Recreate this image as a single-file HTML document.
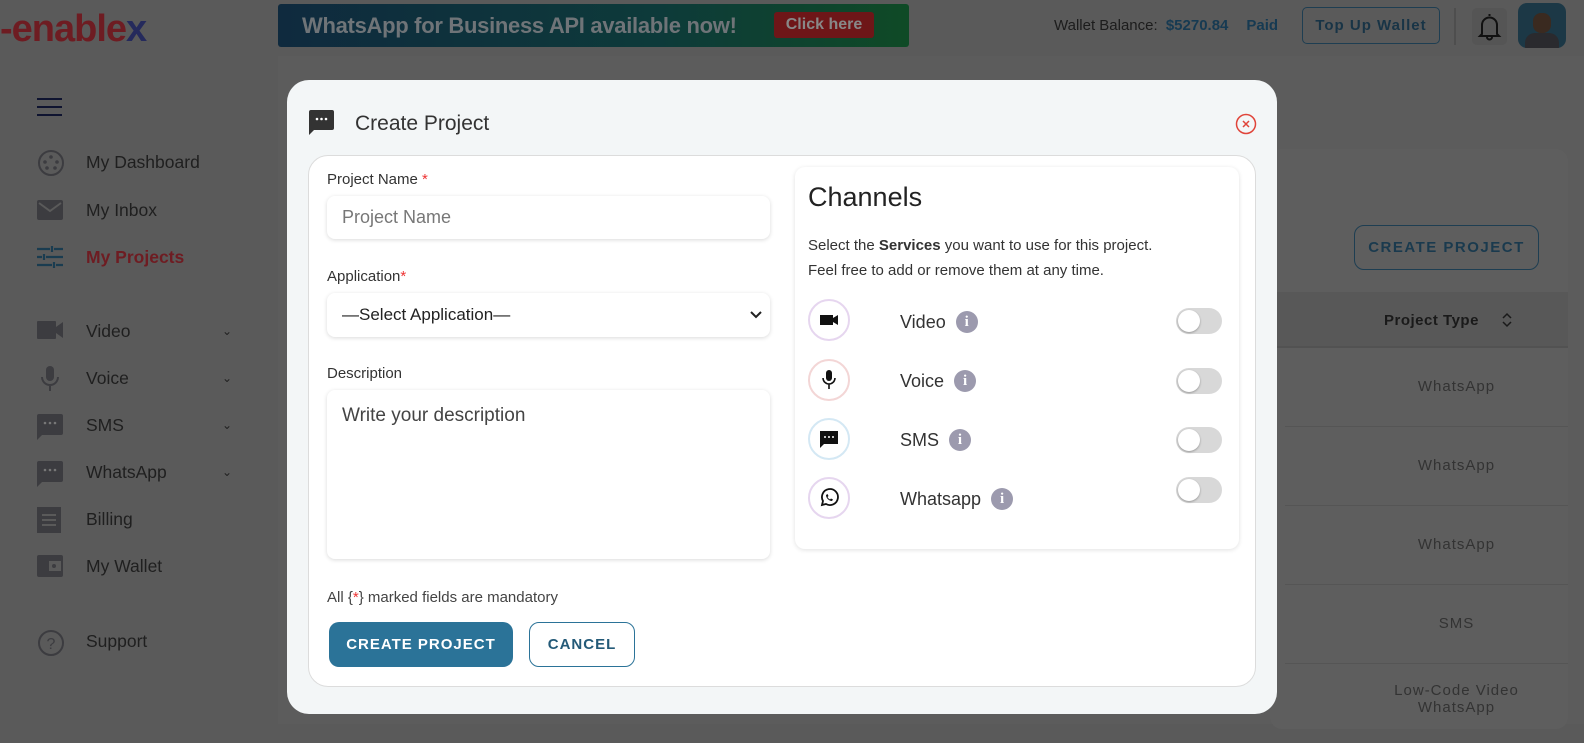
<!DOCTYPE html>
<html><head><meta charset="utf-8"><style>
*{box-sizing:border-box;margin:0;padding:0}
body{width:1584px;height:724px;overflow:hidden;background:#5a5a5a;font-family:"Liberation Sans",sans-serif;position:relative;color:#2a2a2a}
.abs{position:absolute}
.side div{position:absolute;left:86px;font-size:17.5px;color:#1f1f1f}
.side svg{position:absolute;left:37px}
.chev{position:absolute;left:222px;font-size:12px;color:#222}
.lbl{font-size:15px;color:#333}
.inp{position:absolute;left:327px;width:443px;background:#fff;border-radius:8px;box-shadow:0 1px 4px rgba(0,0,0,.15);font-size:18px;color:#777;padding-left:15px}
.ch{position:absolute;left:808px;width:42px;height:42px;border-radius:50%;border:2px solid #e6d6ef;background:#fff}
.ch svg{position:absolute;left:9px;top:9px}
.chn{position:absolute;left:900px;font-size:18px;color:#333}
.info{display:inline-block;width:22px;height:22px;border-radius:50%;background:#9c9aae;color:#fff;font-size:15px;font-weight:bold;text-align:center;line-height:22px;font-family:"Liberation Serif",serif;vertical-align:2px;margin-left:10px}
.tg{position:absolute;left:1176px;width:46px;height:26px;border-radius:13px;background:#d8d8d8}
.tg::after{content:"";position:absolute;left:2px;top:2px;width:22px;height:22px;border-radius:50%;background:#fff;box-shadow:0 1px 2px rgba(0,0,0,.3)}
.row{position:absolute;left:1285px;width:283px;height:79px;border-bottom:1px solid #555;text-align:center;font-size:15px;color:#333;letter-spacing:1px;padding-left:60px}
</style></head><body>
<div class="abs" style="left:0;top:8px;font-size:38px;font-weight:bold;color:#6e1c22;letter-spacing:-1px">-enable<span style="color:#252a5c">x</span></div>
<div class="abs" style="left:278px;top:4px;width:631px;height:43px;border-radius:3px;background:linear-gradient(90deg,#0f2a3e,#0d3a3a 60%,#0f4a26)">
<div class="abs" style="left:24px;top:9px;font-size:22px;font-weight:bold;color:#6f7478;letter-spacing:-.3px">WhatsApp for Business API available now!</div>
<div class="abs" style="left:496px;top:8px;width:100px;height:26px;background:#6e1618;border-radius:3px;color:#888;font-size:16px;font-weight:bold;text-align:center;line-height:26px">Click here</div></div>
<div class="abs" style="left:1054px;top:17px;font-size:15px;color:#1c1c1c">Wallet Balance: <b style="color:#163a52;margin-left:4px">$5270.84</b><b style="color:#163a52;margin-left:18px">Paid</b></div>
<div class="abs" style="left:1302px;top:7px;width:138px;height:37px;border:1px solid #1e3e52;border-radius:5px;font-size:15px;font-weight:bold;color:#183446;text-align:center;line-height:36px;letter-spacing:1px">Top Up Wallet</div>
<div class="abs" style="left:1454px;top:8px;width:2px;height:37px;background:#4e4e4e"></div>
<div class="abs" style="left:1472px;top:8px;width:35px;height:37px;background:#555;border-radius:5px"><svg width="35" height="37" viewBox="0 0 35 37"><path d="M17.5 6v2M10 26V17a7.5 7.5 0 0 1 15 0v9l2 2H8z M15 29a2.5 2.5 0 0 0 5 0" fill="none" stroke="#111" stroke-width="2"/></svg></div>
<div class="abs" style="left:1518px;top:3px;width:48px;height:45px;border-radius:9px;background:#1c3846;overflow:hidden"><div style="margin:10px auto 0;width:18px;height:20px;background:#3a2a20;border-radius:8px"></div><div style="margin:0 auto;width:34px;height:20px;background:#2a2a2e;border-radius:10px 10px 0 0"></div></div>
<div class="abs" style="left:278px;top:56px;width:1306px;height:668px;background:#5c5c5c"></div>
<div class="abs" style="left:1270px;top:149px;width:298px;height:580px;background:#5e5e5e;border-radius:12px"></div>
<div class="abs" style="left:1354px;top:225px;width:185px;height:45px;border:1px solid #1e3e52;border-radius:10px;font-size:15px;font-weight:bold;color:#1a3a4e;text-align:center;line-height:44px;letter-spacing:1.5px">CREATE PROJECT</div>
<div class="abs" style="left:1270px;top:292px;width:298px;height:56px;background:#585858;border-bottom:2px solid #525252"></div>
<div class="abs" style="left:1384px;top:312px;font-size:15px;font-weight:bold;color:#1a1a1a;letter-spacing:.5px">Project Type</div>
<svg class="abs" style="left:1500px;top:311px" width="14" height="18"><path d="M3 7l4-4 4 4M3 11l4 4 4-4" fill="none" stroke="#1a1a1a" stroke-width="1.5"/></svg>
<div class="row" style="top:348px;padding-top:30px">WhatsApp</div>
<div class="row" style="top:427px;padding-top:30px">WhatsApp</div>
<div class="row" style="top:506px;padding-top:30px">WhatsApp</div>
<div class="row" style="top:585px;padding-top:30px">SMS</div>
<div class="row" style="top:664px;padding-top:18px;border:0">Low-Code Video<br>WhatsApp</div>
<div class="side">
<div class="abs" style="left:37px;top:98px;width:25px;height:2px;background:#0f1430;box-shadow:0 8px 0 #0f1430,0 16px 0 #0f1430"></div>
<svg style="top:149px" width="28" height="28"><circle cx="14" cy="14" r="12" fill="none" stroke="#3c3c40" stroke-width="2"/><circle cx="14" cy="8" r="1.8" fill="#3c3c40"/><circle cx="8" cy="13" r="1.8" fill="#3c3c40"/><circle cx="20" cy="13" r="1.8" fill="#3c3c40"/><circle cx="10" cy="19" r="1.8" fill="#3c3c40"/><circle cx="18" cy="19" r="1.8" fill="#3c3c40"/></svg><div style="top:152px">My Dashboard</div>
<svg style="top:200px" width="26" height="20"><rect width="26" height="20" rx="2" fill="#3c3c40"/><path d="M2 3l11 8 11-8" fill="none" stroke="#5a5a5a" stroke-width="2"/></svg><div style="top:200px">My Inbox</div>
<svg style="top:246px" width="26" height="22"><path d="M0 3h13M17 3h9M15 0v6M0 11h5M9 11h17M7 8v6M0 19h15M19 19h7M17 16v6" stroke="#1a3c50" stroke-width="2.2"/></svg><div style="top:247px;color:#6e1c22;font-weight:bold">My Projects</div>
<svg style="top:321px" width="26" height="18"><rect width="19" height="18" rx="1" fill="#3c3c40"/><path d="M19 6l7-5v16l-7-5z" fill="#3c3c40"/></svg><div style="top:321px">Video</div><span class="chev" style="top:324px">⌄</span>
<svg style="top:365px" width="26" height="28"><rect x="9" y="1" width="8" height="15" rx="4" fill="#3c3c40"/><path d="M5 12a8 8 0 0 0 16 0M13 20v6" fill="none" stroke="#3c3c40" stroke-width="2"/></svg><div style="top:368px">Voice</div><span class="chev" style="top:371px">⌄</span>
<svg style="top:414px" width="26" height="26"><path d="M0 2a2 2 0 0 1 2-2h22a2 2 0 0 1 2 2v17a2 2 0 0 1-2 2H5l-5 5z" fill="#3c3c40"/><circle cx="8" cy="9" r="1.3" fill="#777"/><circle cx="13" cy="9" r="1.3" fill="#777"/><circle cx="18" cy="9" r="1.3" fill="#777"/></svg><div style="top:415px">SMS</div><span class="chev" style="top:418px">⌄</span>
<svg style="top:461px" width="26" height="26"><path d="M0 2a2 2 0 0 1 2-2h22a2 2 0 0 1 2 2v17a2 2 0 0 1-2 2H5l-5 5z" fill="#3c3c40"/><circle cx="8" cy="9" r="1.3" fill="#777"/><circle cx="13" cy="9" r="1.3" fill="#777"/><circle cx="18" cy="9" r="1.3" fill="#777"/></svg><div style="top:462px">WhatsApp</div><span class="chev" style="top:465px">⌄</span>
<svg style="top:507px" width="24" height="26"><rect width="24" height="26" fill="#3c3c40"/><path d="M5 8h14M5 13h14M5 18h14" stroke="#5a5a5a" stroke-width="2"/></svg><div style="top:509px">Billing</div>
<svg style="top:555px" width="26" height="22"><rect width="26" height="22" rx="2" fill="#3c3c40"/><rect x="12" y="6" width="12" height="10" fill="#5a5a5a"/><circle cx="17" cy="11" r="2" fill="#3c3c40"/></svg><div style="top:556px">My Wallet</div>
<svg style="top:629px" width="28" height="28"><circle cx="14" cy="14" r="12" fill="none" stroke="#3c3c40" stroke-width="2"/><text x="14" y="20" text-anchor="middle" font-size="16" fill="#3c3c40" font-family="Liberation Sans">?</text></svg><div style="top:631px">Support</div>
</div>
<div class="abs" style="left:287px;top:80px;width:990px;height:634px;background:#f3f6f7;border-radius:22px"></div>
<svg class="abs" style="left:309px;top:110px" width="25" height="25"><path d="M0 2a2 2 0 0 1 2-2h21a2 2 0 0 1 2 2v16a2 2 0 0 1-2 2H5l-5 5z" fill="#333"/><circle cx="8" cy="9" r="1.3" fill="#fff"/><circle cx="12.5" cy="9" r="1.3" fill="#fff"/><circle cx="17" cy="9" r="1.3" fill="#fff"/></svg>
<div class="abs" style="left:355px;top:112px;font-size:21px;color:#333">Create Project</div>
<svg class="abs" style="left:1235px;top:113px" width="22" height="22"><circle cx="11" cy="11" r="9.5" fill="none" stroke="#e0443a" stroke-width="1.5"/><path d="M8 8l6 6M14 8l-6 6" stroke="#e0443a" stroke-width="1.5"/></svg>
<div class="abs" style="left:308px;top:155px;width:948px;height:532px;background:#fff;border:1px solid #dcdcdc;border-radius:20px"></div>
<div class="abs lbl" style="left:327px;top:171px">Project Name <span style="color:#e33">*</span></div>
<div class="inp" style="top:196px;height:43px;line-height:43px">Project Name</div>
<div class="abs lbl" style="left:327px;top:268px">Application<span style="color:#e33">*</span></div>
<div class="inp" style="top:293px;height:44px;line-height:44px;color:#222;font-size:17px">—Select Application—<svg style="position:absolute;right:8px;top:18px" width="12" height="8"><path d="M1 1l5 5 5-5" fill="none" stroke="#222" stroke-width="2"/></svg></div>
<div class="abs lbl" style="left:327px;top:365px">Description</div>
<div class="inp" style="top:390px;height:169px;padding-top:15px;color:#444;font-size:19px">Write your description</div>
<div class="abs" style="left:327px;top:589px;font-size:15px;color:#444">All {<span style="color:#e33">*</span>} marked fields are mandatory</div>
<div class="abs" style="left:329px;top:622px;width:184px;height:45px;background:#2b7398;border-radius:10px;color:#fff;font-size:15px;font-weight:bold;letter-spacing:1px;text-align:center;line-height:45px">CREATE PROJECT</div>
<div class="abs" style="left:529px;top:622px;width:106px;height:45px;border:1px solid #2b7398;border-radius:10px;color:#245a78;font-size:15px;font-weight:bold;letter-spacing:1px;text-align:center;line-height:43px">CANCEL</div>
<div class="abs" style="left:795px;top:167px;width:444px;height:382px;background:#fff;border-radius:10px;box-shadow:0 1px 5px rgba(0,0,0,.12)"></div>
<div class="abs" style="left:808px;top:182px;font-size:27px;color:#222">Channels</div>
<div class="abs" style="left:808px;top:233px;font-size:15px;color:#333;line-height:25px">Select the <b>Services</b> you want to use for this project.<br>Feel free to add or remove them at any time.</div>
<div class="ch" style="top:299px"><svg width="20" height="20"><rect x="1" y="5" width="13" height="10" fill="#111"/><path d="M14 8l5-3v10l-5-3z" fill="#111"/></svg></div>
<div class="ch" style="top:359px;border-color:#f3d6d6"><svg width="20" height="20"><rect x="7" y="0" width="6" height="11" rx="3" fill="#111"/><path d="M4 8a6 6 0 0 0 12 0M10 14v5" fill="none" stroke="#111" stroke-width="1.6"/></svg></div>
<div class="ch" style="top:418px;border-color:#d4e8f4"><svg width="20" height="20"><path d="M1 2h18v13H5l-4 4z" fill="#111"/><circle cx="6" cy="8" r="1" fill="#fff"/><circle cx="10" cy="8" r="1" fill="#fff"/><circle cx="14" cy="8" r="1" fill="#fff"/></svg></div>
<div class="ch" style="top:477px"><svg width="20" height="20"><path d="M3 17l1-4a8 8 0 1 1 3 3z" fill="none" stroke="#111" stroke-width="1.8"/><path d="M7 7c0 3 3 6 6 6l1-1.5-2-1-1 1c-1-.5-2-1.5-2.5-2.5l1-1-1-2z" fill="#111"/></svg></div>
<div class="chn" style="top:311px">Video<span class="info">i</span></div>
<div class="chn" style="top:370px">Voice<span class="info">i</span></div>
<div class="chn" style="top:429px">SMS<span class="info">i</span></div>
<div class="chn" style="top:488px">Whatsapp<span class="info">i</span></div>
<div class="tg" style="top:308px"></div>
<div class="tg" style="top:368px"></div>
<div class="tg" style="top:427px"></div>
<div class="tg" style="top:477px"></div>
</body></html>
